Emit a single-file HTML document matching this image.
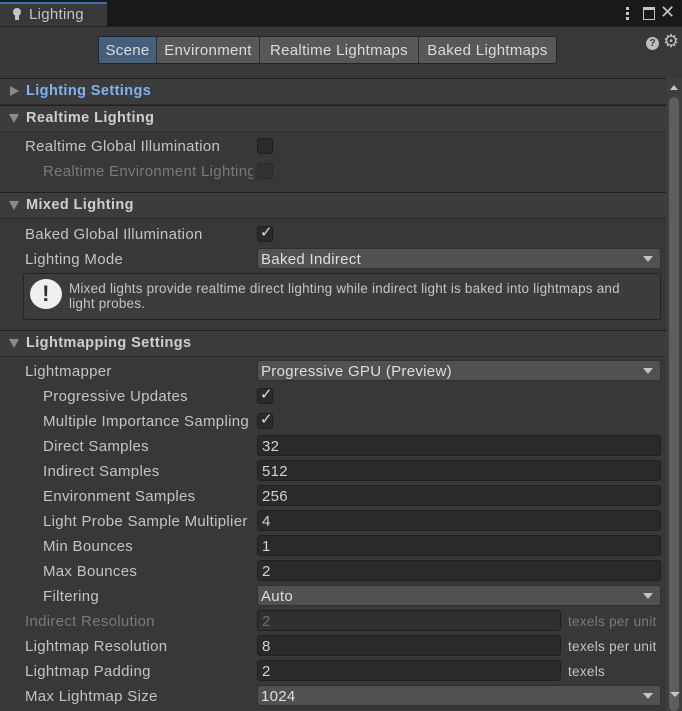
<!DOCTYPE html><html><head><style>
body{margin:0;width:682px;height:711px;overflow:hidden;background:#383838;font-family:"Liberation Sans",sans-serif;font-size:15px;letter-spacing:0.3px;color:#c4c4c4;position:relative}
.a{position:absolute}
.lbl{position:absolute;line-height:20px;white-space:nowrap;overflow:hidden}
.dis{color:#7a7a7a}
.hdr{position:absolute;left:0;width:666px;height:25px;background:#3c3c3c;border-top:1px solid #1f1f1f;border-bottom:1px solid #2c2c2c}
.hdr span{position:absolute;left:26px;top:4px;font-weight:bold;color:#cfcfcf;font-size:14.5px;letter-spacing:0.4px}
.tri{position:absolute;left:9px;top:8px;width:0;height:0;border-left:5px solid transparent;border-right:5px solid transparent;border-top:9px solid #8a8a8a}
.trir{position:absolute;left:10px;top:7px;width:0;height:0;border-top:5px solid transparent;border-bottom:5px solid transparent;border-left:9px solid #8a8a8a}
.cb{position:absolute;left:257px;width:14px;height:14px;background:#2b2b2b;border:1px solid #1e1e1e;border-radius:3px}
.fld{position:absolute;left:257px;height:21px;background:#2a2a2a;border:1px solid #202020;border-radius:3px;line-height:21px;padding-left:4px;box-sizing:border-box;color:#d2d2d2}
.dd{position:absolute;left:257px;width:404px;height:21px;background:#515151;border:1px solid #303030;border-radius:3px;line-height:21px;padding-left:3px;box-sizing:border-box;color:#dedede}
.dd:after{content:"";position:absolute;right:7px;top:7px;border-left:5px solid transparent;border-right:5px solid transparent;border-top:6px solid #c4c4c4}
.unit{position:absolute;left:568px;line-height:20px;font-size:13.5px}
.chk{position:absolute;left:2px;top:-4px;font-size:15px;color:#e0e0e0}
.tb{white-space:nowrap;text-align:center;border-right:1px solid #303030;box-sizing:border-box}
</style></head><body>
<div class="a" style="left:0;top:0;width:682px;height:26px;background:#191919"></div>
<div class="a" style="left:0;top:2px;width:107px;height:24px;background:#383838;border-top:2px solid #3a72b0;box-sizing:border-box"></div>
<div class="a" style="left:13px;top:8px;width:8px;height:8px;border-radius:50%;background:#c4c4c4"></div>
<div class="a" style="left:15px;top:15px;width:4px;height:5px;background:#c4c4c4"></div>
<div class="lbl" style="left:29px;top:5px;color:#c4c4c4">Lighting</div>
<div class="a" style="left:626px;top:7px;width:3px;height:3px;background:#c4c4c4;box-shadow:0 5px #c4c4c4,0 10px #c4c4c4"></div>
<div class="a" style="left:643px;top:7px;width:10px;height:9px;border:1px solid #c4c4c4;border-top-width:3px"></div>
<div class="lbl" style="left:660px;top:2px;font-size:18px;color:#c4c4c4">✕</div>
<div class="a" style="left:0;top:26px;width:682px;height:1px;background:#232323"></div>
<div class="a" style="left:98px;top:36px;width:459px;height:28px;border:1px solid #242424;border-radius:3px;background:#585858;overflow:hidden;display:flex;line-height:27px;color:#dcdcdc;box-sizing:border-box">
<div class="tb" style="width:58px;background:#46607c">Scene</div>
<div class="tb" style="width:103px">Environment</div>
<div class="tb" style="width:159px">Realtime Lightmaps</div>
<div class="tb" style="flex:1;border:0">Baked Lightmaps</div></div>
<div class="a" style="left:646px;top:37px;width:13px;height:13px;border-radius:50%;background:#bdbdbd;color:#383838;font-size:10px;font-weight:bold;text-align:center;line-height:13px;letter-spacing:0">?</div>
<div class="lbl" style="left:663px;top:31px;font-size:18px;color:#bdbdbd">⚙</div>
<div class="a" style="left:666px;top:78px;width:16px;height:633px;background:#3e3e3e"></div>
<div class="a" style="left:670px;top:85px;border-left:4px solid transparent;border-right:4px solid transparent;border-bottom:5px solid #c4c4c4"></div>
<div class="a" style="left:669px;top:97px;width:10px;height:614px;background:#5e5e5e;border-radius:5px"></div>
<div class="hdr" style="top:78px"><div class="trir"></div><span style="color:#7eb4f0">Lighting Settings</span></div>
<div class="hdr" style="top:105px"><div class="tri"></div><span>Realtime Lighting</span></div>
<div class="lbl" style="left:25px;top:137px">Realtime Global Illumination</div><div class="cb" style="top:138px"></div>
<div class="lbl dis" style="left:43px;top:162px;width:210px">Realtime Environment Lighting</div><div class="cb" style="top:163px;opacity:.5"></div>
<div class="hdr" style="top:192px"><div class="tri"></div><span>Mixed Lighting</span></div>
<div class="lbl" style="left:25px;top:225px">Baked Global Illumination</div><div class="cb" style="top:226px"><span class="chk">✓</span></div>
<div class="lbl" style="left:25px;top:250px">Lighting Mode</div><div class="dd" style="top:248px">Baked Indirect</div>
<div class="a" style="left:23px;top:273px;width:638px;height:47px;border:1px solid #242424;border-radius:3px;background:#3c3c3c;box-sizing:border-box"></div>
<div class="a" style="left:30px;top:279px;width:32px;height:30px;border-radius:50%;background:#efefef;color:#303030;font-weight:bold;font-size:22px;text-align:center;line-height:30px">!</div>
<div class="a" style="left:69px;top:281px;font-size:13.5px;line-height:15px;letter-spacing:0.2px;color:#c4c4c4;width:575px">Mixed lights provide realtime direct lighting while indirect light is baked into lightmaps and light probes.</div>
<div class="hdr" style="top:330px"><div class="tri"></div><span>Lightmapping Settings</span></div>
<div class="lbl" style="left:25px;top:362px">Lightmapper</div><div class="dd" style="top:360px">Progressive GPU (Preview)</div>
<div class="lbl" style="left:43px;top:387px">Progressive Updates</div><div class="cb" style="top:388px"><span class="chk">✓</span></div>
<div class="lbl" style="left:43px;top:412px;width:211px">Multiple Importance Sampling</div><div class="cb" style="top:413px"><span class="chk">✓</span></div>
<div class="lbl" style="left:43px;top:437px">Direct Samples</div><div class="fld" style="top:435px;width:404px">32</div>
<div class="lbl" style="left:43px;top:462px">Indirect Samples</div><div class="fld" style="top:460px;width:404px">512</div>
<div class="lbl" style="left:43px;top:487px">Environment Samples</div><div class="fld" style="top:485px;width:404px">256</div>
<div class="lbl" style="left:43px;top:512px;width:213px">Light Probe Sample Multiplier</div><div class="fld" style="top:510px;width:404px">4</div>
<div class="lbl" style="left:43px;top:537px">Min Bounces</div><div class="fld" style="top:535px;width:404px">1</div>
<div class="lbl" style="left:43px;top:562px">Max Bounces</div><div class="fld" style="top:560px;width:404px">2</div>
<div class="lbl" style="left:43px;top:587px">Filtering</div><div class="dd" style="top:585px">Auto</div>
<div class="lbl dis" style="left:25px;top:612px">Indirect Resolution</div><div class="fld" style="top:610px;width:304px;color:#6e6e6e;background:#303030">2</div><div class="unit dis" style="top:612px">texels per unit</div>
<div class="lbl" style="left:25px;top:637px">Lightmap Resolution</div><div class="fld" style="top:635px;width:304px">8</div><div class="unit" style="top:637px">texels per unit</div>
<div class="lbl" style="left:25px;top:662px">Lightmap Padding</div><div class="fld" style="top:660px;width:304px">2</div><div class="unit" style="top:662px">texels</div>
<div class="lbl" style="left:25px;top:687px">Max Lightmap Size</div><div class="dd" style="top:685px">1024</div>
<div class="a" style="left:670px;top:692px;border-left:5px solid transparent;border-right:5px solid transparent;border-top:5px solid #c4c4c4"></div>
</body></html>
